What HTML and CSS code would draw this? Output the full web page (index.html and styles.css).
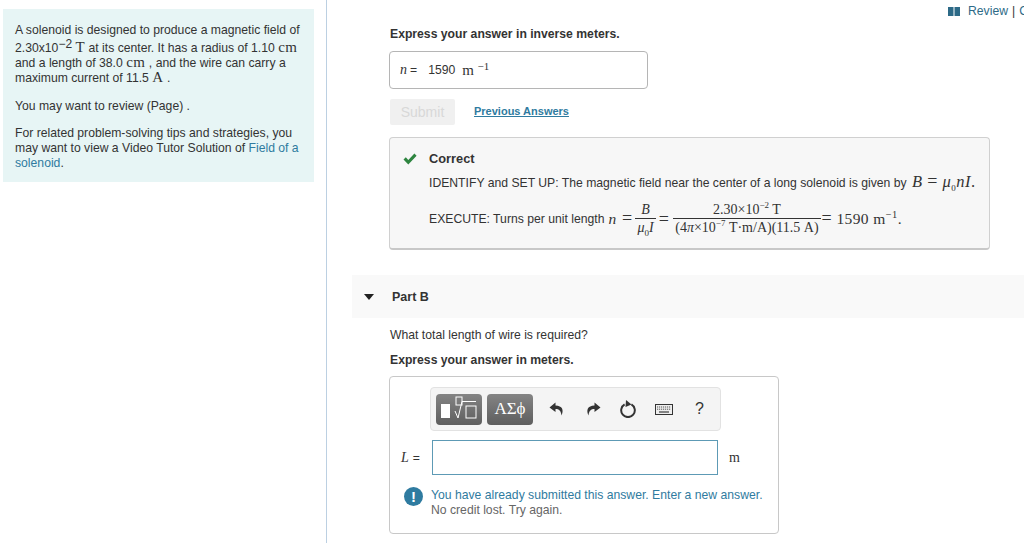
FILE: index.html
```html
<!DOCTYPE html>
<html lang="en">
<head>
  <meta charset="UTF-8" />
  <title>Solenoid problem</title>
  <link rel="stylesheet" href="styles.css">
</head>
<body>
  <div class="container">
    <div class="left-side">
      <div class="intro">
        <p>A solenoid is designed to produce a magnetic field of
        <span class="line tall">2.30x10<sup class="exp">&minus;2</sup> <span class="math big">T</span> at its center. It has a radius of 1.10 <span class="math big">cm</span></span>
        <span class="line">and a length of 38.0 <span class="math big">cm</span> , and the wire can carry a</span>
        <span class="line">maximum current of 11.5 <span class="math big">A</span> .</span></p>
        <p>You may want to review (Page) .</p>
        <p>For related problem-solving tips and strategies, you<br>
        may want to view a Video Tutor Solution of <a href="#">Field of a<br>solenoid</a>.</p>
      </div>
    </div>

    <div class="right-side">
      <div class="review-bar">
        <svg class="book" width="12" height="9" viewBox="0 0 12 9"><rect width="5.5" height="9" fill="#2d6a87"/><rect x="6.5" width="5.5" height="9" fill="#2d6a87"/></svg>
        <span class="review-link">Review</span>
        <span class="review-sep">|</span>
        <span class="review-link">C</span>
      </div>

      <div class="part">
        <p class="instruction first">Express your answer in inverse meters.</p>
        <div class="answer-given">
          <span class="math var">n</span><span class="eq">=</span>
          <span class="value">1590</span>
          <span class="math unit">m</span><sup class="unit-exp">&minus;1</sup>
        </div>
        <div class="actions">
          <button type="button" class="submit" disabled>Submit</button>
          <a href="#" class="previous">Previous Answers</a>
        </div>

        <div class="feedback">
          <svg class="check" width="14" height="12" viewBox="0 0 14 12"><path d="M0.5 6.5 L2.8 4.3 L5.3 6.9 L11.4 0.6 L13.6 2.8 L5.3 11.4 Z" fill="#2e8540"/></svg>
          <div class="feedback-body">
            <p class="correct">Correct</p>
            <p class="identify">IDENTIFY and SET UP: The magnetic field near the center of a long solenoid is given by <span class="math eqn inline-eqn"><i>B</i> <span class="rel">=</span> <i>&mu;</i><sub>0</sub><i>nI</i>.</span></p>
            <div class="execute">
              <span>EXECUTE: Turns per unit length</span>
              <span class="math eqn n-eq"><i>n</i> <span class="rel">=</span></span>
              <span class="frac math"><span class="num"><i>B</i></span><span class="den"><i>&mu;</i><sub>0</sub><i>I</i></span></span>
              <span class="math eqn rel">=</span>
              <span class="frac frac-long math"><span class="num">2.30&times;10<sup>&minus;2</sup> T</span><span class="den">(4<i>&pi;</i>&times;10<sup>&minus;7</sup> T&middot;m/A)(11.5 A)</span></span>
              <span class="math eqn"><span class="rel">=</span> 1590 m<sup>&minus;1</sup>.</span>
            </div>
          </div>
        </div>
      </div>

      <div class="part-header">
        <span class="caret"></span>
        <h3>Part B</h3>
      </div>

      <div class="part">
        <p class="question">What total length of wire is required?</p>
        <p class="instruction">Express your answer in meters.</p>

        <div class="answer-box">
          <div class="toolbar">
            <button type="button" class="tool-btn templates" aria-label="Templates">
              <svg width="40" height="26" viewBox="0 0 40 26"><rect x="2" y="8" width="9" height="14" fill="#fff"/><rect x="17" y="1" width="6" height="8" fill="none" stroke="#fff"/><path d="M16 15 L19 22 L23 5.5 L37 5.5" fill="none" stroke="#fff"/><rect x="27" y="10" width="10" height="12" fill="none" stroke="#fff"/></svg>
            </button>
            <button type="button" class="tool-btn symbols">&Alpha;&Sigma;&#981;</button>
            <svg class="tool-icon undo" width="16" height="14" viewBox="0 0 16 14"><path d="M6.5 0.5 L0.5 5.5 L6.5 10 L6.5 7 C10 7 12 8.5 12.5 13.5 C15 8 13.5 3.6 6.5 3.4 Z" fill="#333"/></svg>
            <svg class="tool-icon redo" width="16" height="14" viewBox="0 0 16 14"><path d="M9.5 0.5 L15.5 5.5 L9.5 10 L9.5 7 C6 7 4 8.5 3.5 13.5 C1 8 2.5 3.6 9.5 3.4 Z" fill="#333"/></svg>
            <svg class="tool-icon reset" width="18" height="18" viewBox="0 0 18 18"><path d="M5.6 4.4 A6.8 6.8 0 1 0 12.4 4.4" fill="none" stroke="#333" stroke-width="2"/><path d="M7 0 L12.5 4.6 L6.5 7 Z" fill="#333"/></svg>
            <svg class="tool-icon keyboard" width="18" height="11" viewBox="0 0 18 11"><rect x="0.5" y="0.5" width="17" height="10" fill="#eee" stroke="#333"/><path d="M2 3 H16 M2 5.2 H16" stroke="#555" stroke-dasharray="1.2 .8"/><path d="M4 8 H14" stroke="#555" stroke-width="1.4"/></svg>
            <span class="help">?</span>
          </div>

          <div class="input-row">
            <span class="input-label"><span class="math var">L</span><span class="eq">=</span></span>
            <div class="input-field"></div>
            <span class="math input-unit">m</span>
          </div>

          <div class="message">
            <span class="alert-icon">!</span>
            <p><span class="alert-text">You have already submitted this answer. Enter a new answer.</span><br>No credit lost. Try again.</p>
          </div>
        </div>
      </div>
    </div>
  </div>
</body>
</html>
```

FILE: styles.css
```css
* {
  margin: 0;
  padding: 0;
  box-sizing: border-box;
}

html, body {
  height: 100%;
  overflow: hidden;
  background: #fff;
  font-family: 'Liberation Sans', Arial, sans-serif;
  font-size: 12.2px;
  color: #333;
}

a {
  color: #2f7ba0;
  text-decoration: none;
}

.math {
  font-family: 'Liberation Serif', 'Times New Roman', serif;
}

.container {
  display: flex;
  height: 543px;
}

.left-side {
  flex: 0 0 327px;
  padding: 9px 12px 0 3px;
  border-right: 1px solid #bcd0e2;
}

.intro {
  background: #e7f5f5;
  padding: 14px 12px 12px 12px;
  line-height: 15px;
  height: 173px;
}

.intro p {
  margin-bottom: 12px;
}

.intro p:first-child {
  margin-bottom: 13px;
}

.line {
  display: block;
}

.tall {
  margin-top: 3px;
}

.exp {
  font-size: 12px;
  line-height: 0;
  vertical-align: 4px;
}

.big {
  font-size: 15px;
  line-height: 0;
  letter-spacing: 0.5px;
}

.right-side {
  flex: 1;
  min-width: 0;
  overflow: hidden;
}

.review-bar {
  display: flex;
  align-items: center;
  height: 22px;
  padding-left: 621px;
  white-space: nowrap;
  color: #2d6a87;
}

.book {
  flex: none;
  margin-right: 8px;
}

.review-sep {
  margin: 0 4px;
  color: #333;
}

.part {
  padding-left: 62px;
}

.instruction {
  font-weight: bold;
  line-height: 15px;
}

.instruction.first {
  margin-top: 5px;
  padding-left: 1px;
}

.answer-given {
  display: flex;
  align-items: center;
  width: 259px;
  height: 38px;
  margin-top: 9px;
  padding-left: 10px;
  border: 1px solid #b5b5b5;
  border-radius: 4px;
}

.var {
  font-style: italic;
  font-size: 14px;
}

.eq {
  margin: 0 11px 0 3px;
}

.unit {
  margin-left: 7px;
  font-size: 15px;
  letter-spacing: 0.5px;
}

.unit-exp {
  margin: 0 0 9px 3px;
  font-family: 'Liberation Serif', serif;
  font-size: 11px;
}

.actions {
  display: flex;
  align-items: center;
  margin-top: 10px;
  height: 26px;
}

.submit {
  width: 65px;
  height: 26px;
  margin-left: 1px;
  font-family: inherit;
  font-size: 14px;
  color: #d8d8d8;
  background: #f0f0f0;
  border: none;
  border-radius: 2px;
}

.previous {
  margin: 0 0 2px 19px;
  font-size: 11px;
  font-weight: bold;
  text-decoration: underline;
}

.feedback {
  display: flex;
  width: 601px;
  height: 113px;
  margin-top: 12px;
  padding: 13px 0 0 13px;
  background: #f7f7f7;
  border: 1px solid #d0d0d0;
  border-bottom: 2px solid #c8c8c8;
  border-radius: 4px;
}

.check {
  flex: none;
  margin: 2px 12px 0 0;
}

.correct {
  font-size: 12.8px;
  font-weight: bold;
  line-height: 15px;
}

.identify {
  margin-top: 6px;
  line-height: 19px;
  white-space: nowrap;
}

.eqn {
  font-size: 15.5px;
  letter-spacing: 0.4px;
}

.inline-eqn {
  margin-left: 2px;
  font-size: 16.5px;
  letter-spacing: 0.5px;
}

.rel {
  font-size: 18px;
  line-height: 0;
}

.eqn sub {
  font-size: 9px;
  line-height: 0;
}

.eqn sup {
  font-size: 10.5px;
  line-height: 0;
}

.execute {
  display: flex;
  align-items: center;
  margin-top: 9px;
  white-space: nowrap;
}

.n-eq {
  margin-left: 4px;
}

.n-eq .rel {
  margin-left: 1px;
}

.frac {
  display: inline-flex;
  flex-direction: column;
  align-items: center;
  margin: 0 3px;
  font-size: 14px;
  line-height: 15px;
}

.frac .num {
  padding: 0 2px 1px;
}

.frac .den {
  align-self: stretch;
  padding: 1px 2px 0;
  text-align: center;
  border-top: 1px solid #333;
}

.frac sub, .frac sup {
  font-size: 9px;
  line-height: 0;
}

.frac-long {
  margin: 0 1px 0 4px;
}

.part-header {
  display: flex;
  align-items: center;
  height: 43px;
  margin: 25px 0 0 25px;
  padding: 1px 0 0 12px;
  background: #f9f9f9;
}

.caret {
  width: 0;
  height: 0;
  border-left: 5px solid transparent;
  border-right: 5px solid transparent;
  border-top: 6px solid #222;
}

.part-header h3 {
  margin-left: 18px;
  font-size: 12.5px;
  line-height: 15px;
}

.question {
  margin-top: 10px;
  padding-left: 1px;
  line-height: 15px;
}

.part-header + .part .instruction {
  margin-top: 10px;
  padding-left: 1px;
}

.answer-box {
  width: 390px;
  height: 158px;
  margin-top: 8px;
  padding: 10px 0 0 40px;
  border: 1px solid #c8c8c8;
  border-radius: 4px;
}

.toolbar {
  display: flex;
  align-items: center;
  width: 291px;
  height: 44px;
  padding-left: 5px;
  background: #f4f4f4;
  border: 1px solid #e2e2e2;
  border-radius: 4px;
}

.tool-btn {
  display: flex;
  flex: none;
  align-items: center;
  justify-content: center;
  width: 46px;
  height: 31px;
  margin-right: 5px;
  font-family: 'Liberation Serif', serif;
  font-size: 17px;
  color: #fff;
  background: linear-gradient(#848484, #5e5e5e);
  border: none;
  border-radius: 4px;
}

.tool-icon {
  flex: none;
}

.undo {
  margin-left: 11px;
}

.redo {
  margin-left: 20px;
}

.reset {
  margin-left: 18px;
}

.keyboard {
  margin-left: 18px;
}

.help {
  margin-left: 22px;
  font-size: 16px;
}

.input-row {
  display: flex;
  align-items: center;
  height: 35px;
  margin: 9px 0 0 -40px;
}

.input-label {
  width: 42px;
  padding-left: 11px;
  white-space: nowrap;
}

.input-label .eq {
  margin: 0 0 0 4px;
}

.input-field {
  width: 286px;
  height: 35px;
  background: #fff;
  border: 1px solid #5d9ab5;
}

.input-unit {
  margin-left: 11px;
  font-size: 14px;
  letter-spacing: 0.4px;
}

.message {
  display: flex;
  margin: 13px 0 0 -26px;
  line-height: 15px;
  color: #666;
  white-space: nowrap;
}

.alert-icon {
  flex: none;
  width: 19px;
  height: 19px;
  margin: -1px 8px 0 0;
  font-size: 15px;
  font-weight: bold;
  line-height: 19px;
  text-align: center;
  color: #fff;
  background: #2f7ba0;
  border-radius: 50%;
}

.alert-text {
  color: #2f7ba0;
}
```
